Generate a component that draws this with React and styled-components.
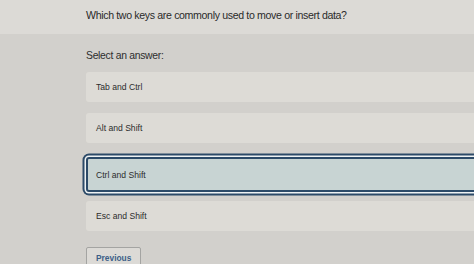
import React from 'react';
import styled, { createGlobalStyle } from 'styled-components';

const GlobalStyle = createGlobalStyle`
  html, body {
    margin: 0;
    padding: 0;
    background: #d2d0cc;
    overflow: hidden;
  }
  body {
    font-family: "Liberation Sans", Arial, sans-serif;
  }
`;

const Page = styled.div`
  width: 474px;
  height: 264px;
  overflow: hidden;
  background: #d2d0cc;
`;

const QuestionBar = styled.div`
  height: 34px;
  background: #dcdad6;
  padding-left: 86px;
  display: flex;
  align-items: center;
  box-sizing: border-box;
  padding-bottom: 5px;
`;

const Question = styled.h1`
  margin: 0;
  font-size: 10.6px;
  font-weight: 400;
  letter-spacing: -0.35px;
  color: #2a2a2a;
  white-space: nowrap;
`;

const Body = styled.div`
  padding: 16px 0 0 86px;
`;

const Prompt = styled.div`
  font-size: 10.4px;
  letter-spacing: -0.3px;
  color: #2e2e2e;
  margin-bottom: 11px;
`;

const Options = styled.div`
  display: flex;
  flex-direction: column;
  gap: 11px;
  width: 420px;
`;

const Option = styled.button`
  display: flex;
  align-items: center;
  height: ${(p) => (p.$selected ? '35px' : '30px')};
  margin: ${(p) => (p.$selected ? '3px 0 -2px' : '0')};
  padding: 0 0 0 ${(p) => (p.$selected ? '8px' : '10px')};
  box-sizing: border-box;
  border: ${(p) => (p.$selected ? '2px solid #2c4a68' : 'none')};
  border-radius: 3px;
  background: ${(p) => (p.$selected ? '#c8d4d3' : '#dddbd6')};
  box-shadow: ${(p) =>
    p.$selected ? '0 0 0 1.5px #eef2f3, 0 0 0 3.5px #2c4a68' : 'none'};
  font-family: inherit;
  font-size: 8.6px;
  color: #2c2c2c;
  text-align: left;
  cursor: pointer;
`;

const Footer = styled.div`
  padding-top: 16px;
`;

const PrevButton = styled.button`
  height: 22px;
  padding: 0 9px;
  border: 1px solid #a4a4a2;
  border-radius: 2px;
  background: #dcdad6;
  font-family: inherit;
  font-size: 8.4px;
  font-weight: 700;
  color: #3d5f88;
  cursor: pointer;
`;

const answers = ['Tab and Ctrl', 'Alt and Shift', 'Ctrl and Shift', 'Esc and Shift'];

export default function App() {
  const [selected, setSelected] = React.useState(2);
  return (
    <Page>
      <GlobalStyle />
      <QuestionBar>
        <Question>Which two keys are commonly used to move or insert data?</Question>
      </QuestionBar>
      <Body>
        <Prompt>Select an answer:</Prompt>
        <Options>
          {answers.map((a, i) => (
            <Option key={a} $selected={i === selected} onClick={() => setSelected(i)}>
              {a}
            </Option>
          ))}
        </Options>
        <Footer>
          <PrevButton>Previous</PrevButton>
        </Footer>
      </Body>
    </Page>
  );
}
